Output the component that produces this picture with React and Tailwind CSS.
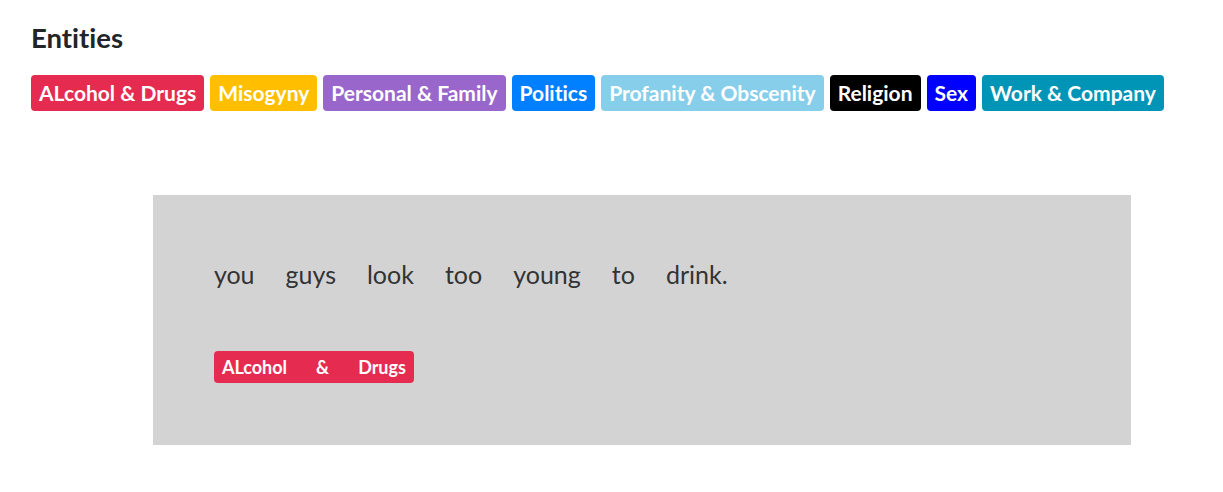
import React from 'react';

const entities = [
  { name: 'ALcohol & Drugs', color: 'bg-[#e52b50]' },
  { name: 'Misogyny', color: 'bg-[#ffbf00]' },
  { name: 'Personal & Family', color: 'bg-[#9966cc]' },
  { name: 'Politics', color: 'bg-[#007fff]' },
  { name: 'Profanity & Obscenity', color: 'bg-[#87ceeb]' },
  { name: 'Religion', color: 'bg-[#000000]' },
  { name: 'Sex', color: 'bg-[#0000ff]' },
  { name: 'Work & Company', color: 'bg-[#0095b6]' },
];

const words = ['you', 'guys', 'look', 'too', 'young', 'to', 'drink.'];

export default function App() {
  return (
    <div className="min-h-[492px] bg-white pt-[20px] font-['Lato','Noto_Sans',sans-serif] [font-variant-ligatures:none]">
      <div className="px-[31px]">
        <h2 className="text-[27.5px] font-bold leading-[36px] text-[#212529]">Entities</h2>
        <div className="mt-[19px] flex flex-wrap gap-[6px]">
          {entities.map(({ name, color }) => (
            <span
              key={name}
              className={`${color} rounded-[4px] px-[8px] text-[21px] font-bold leading-[36px] text-white`}
            >
              {name}
            </span>
          ))}
        </div>
      </div>

      <div className="ml-[12.5%] mt-[84px] h-[250px] w-[80%] bg-[#d3d3d3] px-[61px] pt-[61px]">
        <div className="flex gap-[31px] text-[25px] leading-[36px] text-[#333333]">
          {words.map((w, i) => (
            <span key={i}>{w}</span>
          ))}
        </div>
        <div className="mt-[59px] flex">
          <span className="flex gap-[29px] rounded-[4px] bg-[#e52b50] px-[8px] text-[18px] font-bold leading-[32px] text-white">
            <span>ALcohol</span>
            <span>&amp;</span>
            <span>Drugs</span>
          </span>
        </div>
      </div>
    </div>
  );
}
